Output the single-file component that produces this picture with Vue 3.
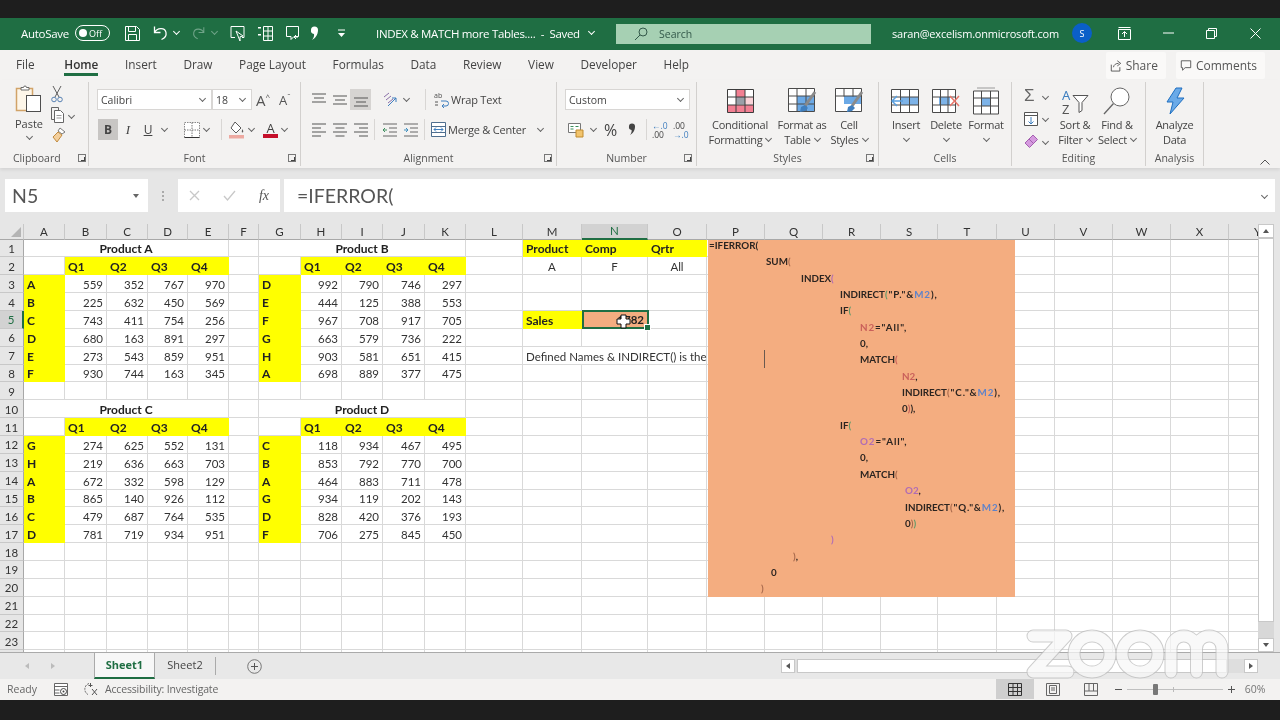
<script setup>
import { computed } from 'vue'

const tabs = ['File', 'Home', 'Insert', 'Draw', 'Page Layout', 'Formulas', 'Data', 'Review', 'View', 'Developer', 'Help']

// column widths, A to Y
const colNames = 'ABCDEFGHIJKLMNOPQRSTUVWXY'.split('')
const colWidths = [41, 42, 41, 40, 41, 30, 42, 41, 41, 42, 41, 57, 59, 66, 59, 58, 58, 58, 57, 59, 58, 58, 58, 58, 58]
const gridColumns = '24px ' + colWidths.map(w => w + 'px').join(' ')

const tables = [
  { name: 'Product A', col: 0, row: 1, labels: 'ABCDEF', data: [[559, 352, 767, 970], [225, 632, 450, 569], [743, 411, 754, 256], [680, 163, 891, 297], [273, 543, 859, 951], [930, 744, 163, 345]] },
  { name: 'Product B', col: 6, row: 1, labels: 'DEFGHA', data: [[992, 790, 746, 297], [444, 125, 388, 553], [967, 708, 917, 705], [663, 579, 736, 222], [903, 581, 651, 415], [698, 889, 377, 475]] },
  { name: 'Product C', col: 0, row: 10, labels: 'GHABCD', data: [[274, 625, 552, 131], [219, 636, 663, 703], [672, 332, 598, 129], [865, 140, 926, 112], [479, 687, 764, 535], [781, 719, 934, 951]] },
  { name: 'Product D', col: 6, row: 10, labels: 'CBAGDF', data: [[118, 934, 467, 495], [853, 792, 770, 700], [464, 883, 711, 478], [934, 119, 202, 143], [828, 420, 376, 193], [706, 275, 845, 450]] }
]

const sheetRows = computed(() => {
  const cells = {}
  const put = (c, r, text, cls, span) => { cells[c + ':' + r] = { text, cls, span } }
  for (const t of tables) {
    put(t.col, t.row, t.name, 'bold center', 5)
    for (let i = 1; i < 5; i++) cells[(t.col + i) + ':' + t.row] = { skip: true }
    put(t.col, t.row + 1, '', '')
    for (let q = 0; q < 4; q++) put(t.col + 1 + q, t.row + 1, 'Q' + (q + 1), 'fill bold')
    t.data.forEach((vals, i) => {
      put(t.col, t.row + 2 + i, t.labels[i], 'fill bold')
      vals.forEach((v, q) => put(t.col + 1 + q, t.row + 2 + i, v, 'num'))
    })
  }
  put(12, 1, 'Product', 'fill bold')
  put(13, 1, 'Comp', 'fill bold')
  put(14, 1, 'Qrtr', 'fill bold')
  put(12, 2, 'A', 'center')
  put(13, 2, 'F', 'center')
  put(14, 2, 'All', 'center')
  put(12, 5, 'Sales', 'fill bold')
  put(12, 7, 'Defined Names & INDIRECT() is the', 'over', 3)
  cells['13:7'] = { skip: true }
  cells['14:7'] = { skip: true }
  const rows = []
  for (let r = 1; r <= 24; r++) {
    const row = { r, cells: [] }
    colNames.forEach((name, c) => {
      const cell = cells[c + ':' + r] || {}
      if (!cell.skip) row.cells.push({ key: name + r, ...cell, selected: name === 'N' && r === 5 })
    })
    rows.push(row)
  }
  return rows
})

const red = '#c9605a'
const blue = '#5f83c9'
const purple = '#b06db4'
const green = '#5f9a6a'
const brown = '#a86a4c'

// third item in a part: the video stretches that bit of text a little
const formula = [
  { x: 1, parts: [['=IFERROR(']] },
  { x: 58, parts: [['SUM'], ['(', brown]] },
  { x: 93, parts: [['INDEX'], ['(', purple]] },
  { x: 132, parts: [['INDIRECT'], ['(', green, 1], ['"P."&', null, 1], ['M2', blue, 1], ['),', null, 1]] },
  { x: 132, parts: [['IF'], ['(', green]] },
  { x: 152, parts: [['N2', red, 1], ['="All",', null, 1]] },
  { x: 152, parts: [['0,']] },
  { x: 152, parts: [['MATCH'], ['(', red]] },
  { x: 194, parts: [['N2', red], [',']] },
  { x: 194, parts: [['INDIRECT'], ['(', brown, 1], ['"C."&', null, 1], ['M2', blue, 1], ['),', null, 1]] },
  { x: 194, parts: [['0'], [')', red], ['),']] },
  { x: 132, parts: [['IF'], ['(', green]] },
  { x: 152, parts: [['O2', purple, 1], ['="All",', null, 1]] },
  { x: 152, parts: [['0,']] },
  { x: 152, parts: [['MATCH'], ['(', brown]] },
  { x: 197, parts: [['O2', purple], [',']] },
  { x: 197, parts: [['INDIRECT'], ['(', brown, 1], ['"Q."&', null, 1], ['M2', blue, 1], ['),', null, 1]] },
  { x: 197, parts: [['0'], [')', brown], [')', green]] },
  { x: 123, parts: [[')', purple]] },
  { x: 85, parts: [[')', brown], [',']] },
  { x: 63, parts: [['0']] },
  { x: 53, parts: [[')', brown]] }
]

const alignIcons = {
  top: 'M0 1h14M2 5h10M0 9h14',
  middle: 'M0 3h14M2 7h10M0 11h14',
  bottom: 'M0 5h14M2 9h10M0 13h14',
  left: 'M0 1h14M0 5h9M0 9h14M0 13h9',
  center: 'M0 1h14M2.5 5h9M0 9h14M2.5 13h9',
  right: 'M0 1h14M5 5h9M0 9h14M5 13h9'
}
</script>

<template>
  <div class="app">
    <div class="blackbar"></div>

    <header class="titlebar">
      <span class="autosave">AutoSave</span>
      <span class="toggle"><i></i>Off</span>
      <svg class="t-save" width="17" height="17" viewBox="0 0 17 17"><path d="M1.500 1.500h11l3 3v11h-14zM4.500 1.500v5h7v-5M4.500 15.500v-6h8v6" fill="none" stroke="#fff" /></svg>
      <svg class="t-undo" width="16" height="16" viewBox="0 0 16 16"><path d="M2.500 1.500v6h6M2.500 7.500C5 2.500 13 2 14 7.500c.6 3.500-2 6-4.500 7" fill="none" stroke="#fff" stroke-width="1.300" /></svg>
      <i class="chev white c-undo"></i>
      <svg class="t-redo" width="14" height="16" viewBox="0 0 16 16"><path d="M13.500 1.500v6h-6M13.500 7.500C11 2.500 3 2 2 7.500c-.6 3.500 2 6 4.500 7" fill="none" stroke="#6fa388" stroke-width="1.200" /></svg>
      <i class="chev dim c-redo"></i>
      <svg class="t-q1" width="15" height="17" viewBox="0 0 15 17"><path d="M5 12.500H1V1.500h13v11h-2" fill="none" stroke="#fff" /><path d="M6 6l7 5-3 .8 0 4.200z" fill="none" stroke="#fff" /></svg>
      <svg class="t-q2" width="16" height="17" viewBox="0 0 16 17"><path d="M2.500 2v13" stroke="#fff" stroke-dasharray="1.500 5.500" stroke-width="3" /><path d="M6.500 1.500h9v14h-9zM6.500 6h9M6.500 11h9M11 1.500v14" fill="none" stroke="#fff" /></svg>
      <svg class="t-q3" width="15" height="17" viewBox="0 0 15 17"><path d="M1.500 1.500h12v10H9l-3 3v-3H1.500z" fill="none" stroke="#fff" /><path d="M11 10l-2 2 2 2M9 12h4" fill="none" stroke="#fff" /></svg>
      <svg class="t-q4" width="9" height="15" viewBox="0 0 9 15"><path d="M1 4a3.500 3.500 0 1 1 7 0c0 5-3 8.500-6 10 1.500-2 2.500-4 2-6A3.500 3.500 0 0 1 1 4z" fill="#fff" /></svg>
      <svg class="t-q5" width="7" height="9" viewBox="0 0 7 9"><path d="M0 1h7" stroke="#fff" /><path d="M0 4h7L3.500 8z" fill="#fff" /></svg>
      <span class="doc">INDEX &amp; MATCH more Tables....&nbsp; - &nbsp;Saved</span>
      <i class="chev white c-doc"></i>
      <div class="search">
        <svg width="14" height="14" viewBox="0 0 14 14"><circle cx="9" cy="5" r="4" fill="none" stroke="#33594a" /><path d="M6 8l-5 5" stroke="#33594a" /></svg>
        <span>Search</span>
      </div>
      <span class="email">saran@excelism.onmicrosoft.com</span>
      <span class="avatar">S</span>
      <svg class="t-win1" width="13" height="13" viewBox="0 0 13 13"><path d="M.5 2.500h12v10H.5zM.5.500h12M6.500 10V5M4 7l2.500-2.500L9 7" fill="none" stroke="#fff" /></svg>
      <svg class="t-win2" width="11" height="2" viewBox="0 0 11 2"><path d="M0 1h11" stroke="#fff" /></svg>
      <svg class="t-win3" width="11" height="11" viewBox="0 0 11 11"><path d="M.5 2.500h8v8h-8zM2.500 2.500v-2h8v8h-2" fill="none" stroke="#fff" /></svg>
      <svg class="t-win4" width="11" height="11" viewBox="0 0 11 11"><path d="M.5.500l10 10M10.500.500l-10 10" stroke="#fff" /></svg>
    </header>

    <nav class="tabs">
      <span v-for="t in tabs" :key="t" class="tab" :class="{ active: t === 'Home' }">{{ t }}</span>
      <div class="tab-right">
        <span class="share">
          <svg width="12" height="13" viewBox="0 0 14 14"><path d="M1.500 6v7.500h10V9M4 9c.5-3 3-4.500 6-4.500M8.500 1.500l4 3-4 3" fill="none" stroke="#4a4a4a" /></svg>
          Share
        </span>
        <span class="share">
          <svg width="12" height="13" viewBox="0 0 14 14"><path d="M1.500 1.500h11v8H6l-3 3v-3H1.500z" fill="none" stroke="#4a4a4a" /></svg>
          Comments
        </span>
      </div>
    </nav>

    <section class="ribbon">
      <div class="group g-clip">
        <div class="body clip">
          <div class="paste">
            <svg width="28" height="28" viewBox="0 0 28 28"><rect x="1.500" y="3.500" width="16" height="22" fill="#fdf6e9" stroke="#d1a368" stroke-width="1.500" /><path d="M6 5V2.500h2.500a1.500 1.500 0 0 1 3 0H14V5z" fill="#fff" stroke="#6a6a6a" /><rect x="11.500" y="10.500" width="14" height="16" fill="#fff" stroke="#4e4e4e" /></svg>
            <span>Paste</span>
            <i class="chev"></i>
          </div>
          <div class="clip-side">
            <svg width="12" height="18" viewBox="0 0 12 18"><path d="M2 1l6 11M10 1L4 12" fill="none" stroke="#5e5e5e" /><circle cx="3" cy="14.500" r="2.300" fill="none" stroke="#5982b3" /><circle cx="9" cy="14.500" r="2.300" fill="none" stroke="#5982b3" /></svg>
            <span class="row-in">
              <svg width="13" height="16" viewBox="0 0 13 16"><path d="M3.500 12.500h-3v-12h7v3" fill="none" stroke="#666" /><path d="M3.500 3.500h6l3 3v9h-9z" fill="#fff" stroke="#666" /><path d="M5.500 8.500h5M5.500 11h5" stroke="#999" /></svg>
              <i class="chev"></i>
            </span>
            <svg width="15" height="16" viewBox="0 0 15 16"><path d="M9 1l5 4-3 2-4-3z" fill="#fff" stroke="#7a7a7a" /><path d="M7 5L2 10l4 5 5-7z" fill="#f3cf9c" stroke="#c08a3e" /></svg>
          </div>
        </div>
        <div class="label">Clipboard<i class="launch"></i></div>
      </div>

      <div class="group g-font">
        <div class="body stack">
          <div class="line">
            <span class="combo name">Calibri<i class="chev"></i></span>
            <span class="combo size">18<i class="chev"></i></span>
            <span class="big-a">A<sup>^</sup></span>
            <span class="big-a small">A<sup>ˇ</sup></span>
          </div>
          <div class="line l2">
            <span class="fb pressed">B</span>
            <span class="fb it">I</span>
            <span class="fb un">U</span>
            <i class="chev"></i>
            <svg class="borders" width="16" height="16" viewBox="0 0 16 16"><path d="M.5.500h15v15H.5z" fill="#fff" stroke="#8a8a8a" stroke-dasharray="1.500 1" /><path d="M8 .500v15M.5 8h15" stroke="#777" stroke-dasharray="1.500 1" /><path d="M.5 15.500h15" stroke="#333" /></svg>
            <i class="chev"></i>
            <i class="vsep"></i>
            <svg width="16" height="18" viewBox="0 0 16 18"><path d="M6 1l6 6-5 5-5-5z" fill="#fff" stroke="#5a5a5a" /><path d="M13.500 8c1 2 1 3.500 0 3.500s-1-1.500 0-3.500z" fill="#5a5a5a" /><rect y="14" width="15" height="3.500" fill="#eda9a1" /></svg>
            <i class="chev"></i>
            <span class="color-a">A</span>
            <i class="chev"></i>
          </div>
        </div>
        <div class="label">Font<i class="launch"></i></div>
      </div>

      <div class="group g-align">
        <div class="body stack">
          <div class="line a1">
            <span v-for="k in ['top', 'middle', 'bottom']" :key="k" class="ab" :class="{ pressed: k === 'bottom' }">
              <svg width="14" height="14" viewBox="0 0 14 14"><path :d="alignIcons[k]" stroke="#555" stroke-width="1.200" /></svg>
            </span>
            <svg class="orient" width="16" height="16" viewBox="0 0 16 16"><path d="M2 5l5-4M4 8l5-4M6 11l5-4" stroke="#8a6fa8" /><path d="M6 14l8-8M10 6h4v4" fill="none" stroke="#3f7fbf" /></svg>
            <i class="chev"></i>
            <i class="vsep tall"></i>
            <svg width="15" height="17" viewBox="0 0 15 17" overflow="visible"><text x="0" y="7" font-size="7" font-family="Noto Sans" fill="#555">ab</text><path d="M1 11h3M1 14h3" stroke="#555" /><path d="M7 10h5a2 2 0 0 1 0 5H8M10 13l-2 2 2 2" fill="none" stroke="#3f7fbf" /></svg>
            <span class="ctext">Wrap Text</span>
          </div>
          <div class="line a2">
            <span v-for="k in ['left', 'center', 'right']" :key="k" class="ab">
              <svg width="14" height="14" viewBox="0 0 14 14"><path :d="alignIcons[k]" stroke="#555" stroke-width="1.200" /></svg>
            </span>
            <i class="vsep"></i>
            <span class="ab">
              <svg width="14" height="14" viewBox="0 0 14 14"><path d="M0 1h14M6 5h8M6 9h8M0 13h14" stroke="#666" /><path d="M4 7H0M2 5L0 7l2 2" fill="none" stroke="#3f8f5f" /></svg>
            </span>
            <span class="ab">
              <svg width="14" height="14" viewBox="0 0 14 14"><path d="M0 1h14M6 5h8M6 9h8M0 13h14" stroke="#666" /><path d="M0 7h4M2 5l2 2-2 2" fill="none" stroke="#3f8fbf" /></svg>
            </span>
            <i class="vsep tall2"></i>
            <svg width="15" height="15" viewBox="0 0 15 15"><path d="M.5.500h14v14H.5zM.5 4.500h14M.5 10.500h14" fill="#fff" stroke="#4f6f8f" /><path d="M3 7.500h9M5 5.500l-2 2 2 2M10 5.500l2 2-2 2" fill="none" stroke="#3f7fbf" /></svg>
            <span class="ctext">Merge &amp; Center</span>
            <i class="chev"></i>
          </div>
        </div>
        <div class="label">Alignment<i class="launch"></i></div>
      </div>

      <div class="group g-num">
        <div class="body stack">
          <div class="line"><span class="combo custom">Custom<i class="chev"></i></span></div>
          <div class="line n2">
            <svg width="17" height="16" viewBox="0 0 17 16"><path d="M.5 1.500h12v9H.5z" fill="#fff" stroke="#777" /><path d="M2.500 4.500h3M2.500 7h3M7.500 4.500h3" stroke="#3a8f5a" /><path d="M8 8h7v7H8z" fill="#f2c46d" stroke="#c18b2e" /></svg>
            <i class="chev"></i>
            <span class="pct">%</span>
            <svg class="comma" width="8" height="13" viewBox="0 0 9 15"><path d="M1 4a3.500 3.500 0 1 1 7 0c0 5-3 8.500-6 10 1.500-2 2.500-4 2-6A3.500 3.500 0 0 1 1 4z" fill="#444" /></svg>
            <i class="vsep"></i>
            <span class="dec"><em>←.0</em><b>.00</b></span>
            <span class="dec"><b>.00</b><em>→.0</em></span>
          </div>
        </div>
        <div class="label">Number<i class="launch"></i></div>
      </div>

      <div class="group g-styles">
        <div class="body bigs">
          <div class="big w-cond">
            <svg width="27" height="24" viewBox="0 0 27 24"><path d="M.5.500h26v23H.5z" fill="#fff" /><path d="M9 .500h9v7.500H9z" fill="#f27f92" /><path d="M9 8h9v7.500H9z" fill="#9a9fa8" /><path d="M.5 16h26v7.500H.5z" fill="#f27f92" /><path d="M18 8h8.500v7.500H18z" fill="#f9d3d8" /><path d="M.5.500h26v23H.5zM.5 8h26M.5 16h26M9 .500v23M18 .500v23" fill="none" stroke="#3c3c3c" /></svg>
            <span>Conditional</span><span>Formatting<i class="chev"></i></span>
          </div>
          <div class="big w-fmt">
            <svg width="29" height="26" viewBox="0 0 29 26"><path d="M.5.500h26v23H.5z" fill="#fff" /><path d="M9 8h17.500v15.500H9z" fill="#6ba9e6" /><path d="M.5.500h26v23H.5zM.5 8h26M.5 16h26M9 .500v23M18 .500v23" fill="none" stroke="#4a4a4a" /><path d="M27 4L17 18" stroke="#8a8a8a" stroke-width="3" /><path d="M17 17l-4 2-1 5 5-1 3-3z" fill="#3f7fbf" /></svg>
            <span>Format as</span><span>Table<i class="chev"></i></span>
          </div>
          <div class="big w-cell">
            <svg width="29" height="26" viewBox="0 0 29 26"><path d="M.5.500h26v23H.5z" fill="#fff" /><path d="M9 8h17.500v8H9z" fill="#6ba9e6" /><path d="M.5.500h26v23H.5zM.5 8h26M9 .500v8M18 .500v8" fill="none" stroke="#4a4a4a" /><path d="M27 4L17 18" stroke="#8a8a8a" stroke-width="3" /><path d="M17 17l-4 2-1 5 5-1 3-3z" fill="#3f7fbf" /></svg>
            <span>Cell</span><span>Styles<i class="chev"></i></span>
          </div>
        </div>
        <div class="label">Styles<i class="launch"></i></div>
      </div>

      <div class="group g-cells">
        <div class="body bigs">
          <div class="big w-ins">
            <svg width="30" height="24" viewBox="0 0 30 24"><path d="M.5.500h27v23H.5z" fill="#fff" /><path d="M10 8h18v8H10z" fill="#7db3e8" /><path d="M.5.500h27v23H.5zM.5 8h27M.5 16h27M9.500.500v23M18.500.500v23" fill="none" stroke="#4a4a4a" /><path d="M12 12H1M6 7l-5 5 5 5" fill="none" stroke="#5aa0e0" stroke-width="1.500" /></svg>
            <span>Insert</span><i class="chev"></i>
          </div>
          <div class="big w-del">
            <svg width="28" height="24" viewBox="0 0 28 24"><path d="M.5.500h23v23H.5z" fill="#fff" /><path d="M7 8h11v8H7z" fill="#7db3e8" /><path d="M.5.500h23v23H.5zM.5 8h23M.5 16h23M8.500.500v23M16 .500v23" fill="none" stroke="#4a4a4a" /><path d="M18 7l9 10M27 7l-9 10" stroke="#e8766a" stroke-width="1.500" /></svg>
            <span>Delete</span><i class="chev"></i>
          </div>
          <div class="big w-for">
            <svg width="26" height="27" viewBox="0 0 26 27"><path d="M4 .500h18" stroke="#9a9a9a" /><path d="M.5 3.500h25v23H.5z" fill="#fff" /><path d="M8.500 10.500h9v8h-9z" fill="#7db3e8" /><path d="M.5 3.500h25v23H.5zM.5 10.500h25M.5 18.500h25M8.500 3.500v23M17.500 3.500v23" fill="none" stroke="#4a4a4a" /></svg>
            <span>Format</span><i class="chev"></i>
          </div>
        </div>
        <div class="label">Cells</div>
      </div>

      <div class="group g-edit">
        <div class="body edit">
          <div class="edit-col">
            <span class="row-in"><em class="sigma">Σ</em><i class="chev"></i></span>
            <span class="row-in"><svg width="14" height="14" viewBox="0 0 14 14"><path d="M.5.500h13v13H.5zM.5 3.500h13" fill="#fff" stroke="#555" /><path d="M7 5v7M4.500 9.500L7 12l2.500-2.500" fill="none" stroke="#3f7fbf" /></svg><i class="chev"></i></span>
            <span class="row-in"><svg width="14" height="14" viewBox="0 0 14 14"><path d="M9 1l4.500 4.500-8 8L1 9z" fill="#d59adf" stroke="#a45fb0" /><path d="M5 5l4.500 4.500" stroke="#a45fb0" /></svg><i class="chev"></i></span>
          </div>
          <div class="big w-sort">
            <svg width="28" height="27" viewBox="0 0 28 27" overflow="visible"><text x="1" y="12" font-size="13" font-family="Noto Sans" fill="#3f7fbf">A</text><text x="1" y="26" font-size="13" font-family="Noto Sans" fill="#555">Z</text><path d="M12 8h15l-6 7v8l-3 2V15z" fill="#fff" stroke="#555" /></svg>
            <span>Sort &amp;</span><span>Filter<i class="chev"></i></span>
          </div>
          <div class="big w-find">
            <svg width="28" height="28" viewBox="0 0 28 28"><circle cx="17" cy="10" r="9" fill="#fff" stroke="#666" /><path d="M10.500 16.500L1 27" stroke="#666" stroke-width="1.300" /></svg>
            <span>Find &amp;</span><span>Select<i class="chev"></i></span>
          </div>
        </div>
        <div class="label">Editing</div>
      </div>

      <div class="group g-ana">
        <div class="body bigs">
          <div class="big w-ana">
            <svg width="20" height="28" viewBox="0 0 20 28"><path d="M11 1L2 15h6L5 27l14-16h-7l5-10z" fill="#6aaae8" stroke="#1f6fc0" /></svg>
            <span>Analyze</span><span>Data</span>
          </div>
        </div>
        <div class="label">Analysis</div>
      </div>

      <svg class="collapse" width="10" height="6" viewBox="0 0 10 6"><path d="M.5 5.500L5 1l4.500 4.500" fill="none" stroke="#555" /></svg>
    </section>

    <div class="formula-row">
      <div class="namebox"><span>N5</span><i class="tri"></i></div>
      <i class="dots"></i>
      <div class="fx">
        <svg width="11" height="11" viewBox="0 0 11 11"><path d="M1 1l9 9M10 1l-9 9" stroke="#c8c8c8" stroke-width="1.300" /></svg>
        <svg width="13" height="11" viewBox="0 0 13 11"><path d="M1 6l3.500 4L12 1" fill="none" stroke="#c8c8c8" stroke-width="1.300" /></svg>
        <em>fx</em>
      </div>
      <div class="fbar"><span>=IFERROR(</span><i class="chev"></i></div>
    </div>

    <div class="sheet">
      <div class="grid" :style="{ gridTemplateColumns: gridColumns }">
        <div class="corner"><i></i></div>
        <div v-for="c in colNames" :key="c" class="ch" :class="{ sel: c === 'N' }">{{ c }}</div>
        <template v-for="row in sheetRows" :key="row.r">
          <div class="rh" :class="{ sel: row.r === 5 }">{{ row.r < 24 ? row.r : '' }}</div>
          <div
            v-for="cell in row.cells"
            :key="cell.key"
            class="cell"
            :class="[cell.cls, { selected: cell.selected }]"
            :style="cell.span ? { gridColumn: 'span ' + cell.span } : null"
          >
            <template v-if="cell.selected">
              <span class="sel-val">1782</span>
              <i class="handle"></i>
            </template>
            <template v-else>{{ cell.text }}</template>
          </div>
        </template>
      </div>

      <div class="textbox">
        <div v-for="(ln, i) in formula" :key="i" class="fline" :style="{ paddingLeft: ln.x + 'px' }">
          <span v-for="(p, j) in ln.parts" :key="j" :class="{ wide: p[2] }" :style="p[1] ? { color: p[1] } : null">{{ p[0] }}</span>
        </div>
        <i class="caret"></i>
      </div>

      <svg class="cursor" width="15" height="15" viewBox="0 0 15 15"><path d="M5 1h5v4h4v5h-4v4H5v-4H1V5h4z" fill="#fff" stroke="#111" /></svg>

      <div class="vscroll">
        <span class="vbtn"><i class="up"></i></span>
        <span class="vthumb"></span>
        <span class="vtrack"></span>
        <span class="vbtn"><i class="down"></i></span>
      </div>
    </div>

    <div class="sheetbar">
      <span class="nav"><i class="lft"></i><i class="rgt"></i></span>
      <span class="stab active">Sheet1</span>
      <span class="stab">Sheet2</span>
      <i class="stab-sep"></i>
      <svg class="plus" width="15" height="15" viewBox="0 0 15 15"><circle cx="7.500" cy="7.500" r="6.800" fill="none" stroke="#777" /><path d="M7.500 4v7M4 7.500h7" stroke="#555" /></svg>
      <div class="hscroll">
        <span class="hbtn"><i class="lft dark"></i></span>
        <span class="hthumb"></span>
        <span class="hbtn r"><i class="rgt dark"></i></span>
      </div>
    </div>

    <footer class="status">
      <span>Ready</span>
      <svg class="st-macro" width="14" height="13" viewBox="0 0 14 13"><path d="M.5.500h13v12H.5zM.5 3.500h13M.5 7h5M.5 10h5" fill="#fff" stroke="#666" /><circle cx="9.500" cy="8.500" r="3" fill="none" stroke="#444" /><circle cx="9.500" cy="8.500" r="1" fill="#444" /></svg>
      <svg class="st-acc" width="15" height="14" viewBox="0 0 15 14"><path d="M6 1.500a6 6 0 0 0-1 11" fill="none" stroke="#666" stroke-dasharray="2 1" /><path d="M7.500 1v4M5.500 3.500h4" stroke="#555" /><path d="M9 7l5 6M14 7l-5 6" stroke="#555" /></svg>
      <span class="acc">Accessibility: Investigate</span>
      <div class="st-right">
        <span class="view active">
          <svg width="14" height="13" viewBox="0 0 14 13"><path d="M.5.500h13v12H.5zM.5 4.500h13M.5 8.500h13M5 .500v12M9.500.500v12" fill="none" stroke="#333" /></svg>
        </span>
        <span class="view">
          <svg width="14" height="13" viewBox="0 0 14 13"><path d="M.5.500h13v12H.5z" fill="none" stroke="#666" /><path d="M3.500 2.500h7v8h-7zM5 5h4M5 7h4" fill="none" stroke="#666" /></svg>
        </span>
        <span class="view">
          <svg width="14" height="13" viewBox="0 0 14 13"><path d="M.5.500h13v12H.5zM.5 8h13M5 .500V8M9.500.500V8" fill="none" stroke="#666" /></svg>
        </span>
        <span class="zoom-ctl">
          <i class="minus"></i>
          <span class="track"><i class="tick"></i><i class="knob"></i></span>
          <i class="add"></i>
        </span>
        <span class="pct-label">60%</span>
      </div>
    </footer>

    <div class="blackbar bottom"></div>

    <svg class="watermark" width="210" height="58" viewBox="0 0 210 58">
      <g fill="none" stroke-linejoin="round" stroke-linecap="round">
        <g stroke="#bdbdbd" stroke-width="13">
          <path d="M11 11h33L11 47h35" />
          <circle cx="70" cy="29" r="18" />
          <circle cx="118" cy="29" r="18" />
          <path d="M149 47V23.750a12.750 12.750 0 0 1 25.500 0V47M174.500 23.750a12.750 12.750 0 0 1 25.500 0V47" />
        </g>
        <g stroke="#f7f7f7" stroke-width="11">
          <path d="M11 11h33L11 47h35" />
          <circle cx="70" cy="29" r="18" />
          <circle cx="118" cy="29" r="18" />
          <path d="M149 47V23.750a12.750 12.750 0 0 1 25.500 0V47M174.500 23.750a12.750 12.750 0 0 1 25.500 0V47" />
        </g>
      </g>
    </svg>
  </div>
</template>

<style>
html, body { margin: 0; background: #1e1e1e; overflow: hidden; }
</style>

<style scoped>
.app {
  position: relative;
  width: 1280px;
  height: 720px;
  display: flex;
  flex-direction: column;
  overflow: hidden;
  background: #e6e6e6;
  font-family: "Open Sans", "Noto Sans", sans-serif;
  color: #444;
  filter: blur(.3px);
}
i { font-style: normal; display: block; }
svg { display: block; flex: none; }
.blackbar { height: 18px; background: #1e1e1e; flex: none; }
.blackbar.bottom { height: 20px; }

.chev {
  width: 4px;
  height: 4px;
  border-right: 1px solid #666;
  border-bottom: 1px solid #666;
  transform: rotate(45deg);
  flex: none;
}
.chev.white { border-color: #fff; }
.chev.dim { border-color: #6fa388; }

/* title bar */
.titlebar {
  height: 32px;
  box-sizing: border-box;
  padding-bottom: 2px;
  flex: none;
  background: #1f6e43;
  color: #fff;
  display: flex;
  align-items: center;
  font-size: 11.500px;
}
.autosave { margin-left: 21px; width: 54px; letter-spacing: -.3px; }
.toggle {
  width: 35px;
  height: 16px;
  box-sizing: border-box;
  border: 1px solid #fff;
  border-radius: 8px;
  display: flex;
  align-items: center;
  font-size: 9px;
  gap: 2px;
  padding-left: 3px;
}
.toggle i { width: 8px; height: 8px; border-radius: 50%; background: #fff; }
.t-save { margin-left: 14px; }
.t-undo { margin-left: 11px; }
.c-undo { margin-left: 6px; margin-top: -3px; }
.t-redo { margin-left: 13px; }
.c-redo { margin-left: 6px; margin-top: -3px; }
.t-q1 { margin-left: 13px; }
.t-q2 { margin-left: 12px; }
.t-q3 { margin-left: 12px; }
.t-q4 { margin-left: 10px; }
.t-q5 { margin-left: 19px; }
.doc { margin-left: 31px; width: 211px; white-space: nowrap; letter-spacing: -.32px; }
.c-doc { margin-left: 2px; margin-top: -3px; }
.search {
  margin-left: 22px;
  width: 255px;
  height: 20px;
  background: #a6d0b3;
  display: flex;
  align-items: center;
  color: #33594a;
  font-size: 10.500px;
  padding-left: 18px;
  box-sizing: border-box;
  gap: 11px;
  margin-top: 2px;
}
.email { margin-left: 21px; width: 170px; white-space: nowrap; letter-spacing: -.2px; font-size: 11px; padding-top: 1px; }
.avatar {
  margin-left: 10px;
  width: 20px;
  height: 20px;
  border-radius: 50%;
  background: #0a5fc8;
  display: flex;
  align-items: center;
  justify-content: center;
  font-size: 9px;
}
.t-win1 { margin-left: 26px; }
.t-win2 { margin-left: 32px; }
.t-win3 { margin-left: 32px; }
.t-win4 { margin-left: 33px; }

/* tabs */
.tabs {
  height: 30px;
  box-sizing: border-box;
  padding: 0 0 2px 16px;
  flex: none;
  background: #f3f2f1;
  display: flex;
  align-items: center;
  gap: 26.600px;
  font-size: 11.800px;
  position: relative;
}
.tab { position: relative; white-space: nowrap; line-height: 28px; }
.tab:first-child { margin-right: 3px; }
.tab.active { font-weight: 600; color: #333; }
.tab.active::after {
  content: "";
  position: absolute;
  left: 0;
  right: 0;
  bottom: 2px;
  height: 3px;
  background: #1f6e43;
}
.tab-right { margin-left: auto; display: flex; gap: 10px; margin-right: 15px; }
.share {
  display: flex;
  align-items: center;
  gap: 4px;
  height: 27px;
  margin-top: 2px;
  padding: 0 8px 0 4px;
  background: #faf9f8;
  font-size: 12px;
  color: #555;
  border-radius: 2px;
}

/* ribbon */
.ribbon {
  height: 88px;
  flex: none;
  background: #f3f2f1;
  display: flex;
  position: relative;
  box-shadow: 0 2px 3px rgba(0, 0, 0, .08);
  font-size: 11px;
}
.group {
  display: flex;
  flex-direction: column;
  box-sizing: border-box;
  border-right: 1px solid #d2d0ce;
  margin: 2px 0 2px;
  flex: none;
}
.g-clip { width: 89px; }
.g-font { width: 212px; }
.g-align { width: 256px; }
.g-num { width: 140px; }
.g-styles { width: 182px; }
.g-cells { width: 133px; }
.g-edit { width: 134px; }
.g-ana { width: 58px; }
.body { flex: 1; min-height: 0; }
.label {
  position: relative;
  height: 16px;
  line-height: 16px;
  text-align: center;
  font-size: 10.500px;
  color: #555;
}
.g-clip .label { text-align: left; padding-left: 13px; }
.launch {
  position: absolute;
  right: 4px;
  top: 4px;
  width: 6px;
  height: 6px;
  border: 1px solid #777;
}
.launch::after {
  content: "";
  position: absolute;
  right: 0;
  bottom: 0;
  width: 3px;
  height: 3px;
  border-right: 1px solid #444;
  border-bottom: 1px solid #444;
}
.g-clip .launch { right: 2px; }

.clip { display: flex; padding: 3px 0 0 14px; gap: 6px; }
.paste { display: flex; flex-direction: column; align-items: center; width: 30px; font-size: 11px; line-height: 14px; }
.paste span { margin-top: 4px; }
.paste .chev { margin-top: 3px; }
.clip-side { display: flex; flex-direction: column; gap: 4px; padding-left: 1px; align-items: flex-start; }
.row-in { display: flex; align-items: center; gap: 5px; }
.stack { display: flex; flex-direction: column; padding-top: 7px; gap: 9px; }
.line { display: flex; align-items: center; height: 21px; }

.combo {
  height: 21px;
  box-sizing: border-box;
  background: #fff;
  border: 1px solid #d8d6d4;
  display: flex;
  align-items: center;
  justify-content: space-between;
  padding: 0 6px 0 3px;
  font-size: 10.500px;
}
.combo .chev { margin-top: -2px; }
.name { width: 115px; margin-left: 8px; }
.size { width: 40px; }
.big-a { font-size: 15px; margin-left: 4px; width: 22px; color: #555; }
.big-a sup { font-size: 8px; vertical-align: 6px; line-height: 0; }
.big-a.small { font-size: 13px; width: 14px; margin-left: 1px; }
.l2 { padding-left: 9px; gap: 0; }
.fb { width: 20px; height: 21px; display: flex; align-items: center; justify-content: center; font-size: 12px; }
.fb.pressed { background: #c8c6c4; font-weight: 700; }
.fb.it { font-style: italic; font-family: "Liberation Serif", serif; font-size: 13px; }
.fb.un { text-decoration: underline; }
.l2 .chev { margin: -2px 9px 0 4px; }
.borders { margin-left: 8px; }
.vsep { width: 1px; height: 21px; background: #d8d6d4; margin: 0 7px 0 3px; }
.color-a { width: 15px; text-align: center; font-size: 13px; line-height: 12px; border-bottom: 4px solid #c50f2a; }

.a1 { padding-left: 7px; }
.a2 { padding-left: 7px; }
.ab { width: 21px; height: 21px; display: flex; align-items: center; justify-content: center; }
.ab.pressed { background: #d6d4d2; }
.orient { margin-left: 11px; }
.a1 .chev { margin: -2px 6px 0 6px; }
.a1 .vsep.tall { margin: 0 8px 0 10px; }
.ctext { font-size: 11px; margin-left: 2px; white-space: nowrap; letter-spacing: -.2px; }
.a2 .chev { margin: -2px 0 0 12px; }
.a2 .vsep { margin: 0 4px 0 3px; }
.a2 .vsep.tall2 { margin: 0 6px 0 3px; }

.custom { width: 125px; margin-left: 8px; }
.n2 { padding-left: 11px; }
.n2 .chev { margin: -2px 0 0 6px; }
.pct { font-size: 16px; margin-left: 8px; width: 17px; }
.comma { margin-left: 7px; }
.n2 .vsep { margin: 0 5px 0 10px; }
.dec { display: flex; flex-direction: column; font-size: 8.500px; line-height: 9px; width: 21px; }
.dec em { font-style: normal; color: #3f7fbf; }
.dec b { font-weight: 400; }

.bigs { display: flex; padding-top: 5px; }
.big {
  display: flex;
  flex-direction: column;
  align-items: center;
  line-height: 15px;
  white-space: nowrap;
  font-size: 11px;
  letter-spacing: -.25px;
  position: relative;
}
.big svg { height: 28px; margin-bottom: 2px; }
.big > span { display: flex; align-items: center; }
.big .chev { margin: -2px 0 0 4px; }
.big > .chev { margin: 4px 0 0; }
.w-cond { width: 68px; margin-left: 9px; }
.w-fmt { width: 56px; }
.w-cell { width: 38px; }
.w-ins { width: 40px; margin-left: 7px; }
.w-del { width: 40px; }
.w-for { width: 40px; }

.edit { display: flex; padding-top: 5px; }
.edit-col { display: flex; flex-direction: column; gap: 5px; width: 46px; padding-left: 12px; box-sizing: border-box; }
.edit-col .row-in { height: 18px; }
.sigma { font-style: normal; font-size: 17px; line-height: 18px; width: 14px; font-family: "Liberation Sans", sans-serif; color: #666; }
.w-sort { width: 34px; }
.w-find { width: 40px; margin-left: 5px; }
.w-ana { width: 58px; }
.collapse { position: absolute; right: 10px; bottom: 3px; }

/* formula row */
.formula-row {
  height: 33px;
  flex: none;
  margin-top: 11px;
  display: flex;
  color: #555;
}
.namebox {
  width: 143px;
  margin-left: 5px;
  background: #fff;
  display: flex;
  align-items: center;
  justify-content: space-between;
  padding: 0 9px 0 7px;
  box-sizing: border-box;
  font-family: Lato, sans-serif;
  font-size: 19.500px;
}
.tri { width: 0; height: 0; border: 3px solid transparent; border-top: 4px solid #666; border-bottom: 0; }
.dots { width: 2px; height: 10px; margin: 12px 12px 0 14px; border-left: 2px dotted #aaa; }
.fx {
  width: 102px;
  background: #fff;
  display: flex;
  align-items: center;
  justify-content: space-between;
  padding: 0 11px;
  box-sizing: border-box;
}
.fx em { font-family: "Liberation Serif", serif; font-size: 14px; color: #555; }
.fbar {
  margin-left: 4px;
  width: 991px;
  background: #fff;
  display: flex;
  align-items: center;
  justify-content: space-between;
  padding: 0 8px 0 13px;
  box-sizing: border-box;
  font-family: Lato, sans-serif;
  font-size: 19.500px;
}

/* sheet */
.sheet {
  height: 429.500px;
  flex: none;
  margin-top: 11.500px;
  position: relative;
  display: flex;
  overflow: hidden;
  border-bottom: 1px solid #aaa;
  box-sizing: border-box;
  font-family: Lato, sans-serif;
  font-size: 11px;
}
.grid {
  display: grid;
  width: 1258px;
  flex: none;
  overflow: hidden;
  grid-template-rows: 16px;
  grid-auto-rows: 17.870px;
  background: #fff;
}
.corner, .ch { background: #e6e6e6; border-right: 1px solid #c8c8c8; border-bottom: 1px solid #a8a8a8; box-sizing: border-box; }
.corner { position: relative; }
.corner i { position: absolute; right: 2px; bottom: 2px; width: 0; height: 0; border-left: 10px solid transparent; border-bottom: 10px solid #b4b4b4; }
.ch { display: flex; align-items: center; justify-content: center; color: #333; font-size: 11.500px; }
.ch.sel { background: #d2d2d2; color: #1f6e43; border-bottom: 2px solid #1f6e43; }
.rh {
  background: #e6e6e6;
  border-right: 1px solid #a8a8a8;
  border-bottom: 1px solid #c8c8c8;
  box-sizing: border-box;
  display: flex;
  align-items: center;
  justify-content: center;
  color: #333;
  font-size: 11.500px;
  padding-top: 1px;
}
.rh.sel { background: #d2d2d2; border-right: 2px solid #1f6e43; color: #1f6e43; }
.cell {
  border-right: 1px solid #d9d9d9;
  border-bottom: 1px solid #d9d9d9;
  box-sizing: border-box;
  display: flex;
  align-items: center;
  padding: 2px 3px 0;
  white-space: nowrap;
  min-width: 0;
  color: #333;
  font-size: 11.500px;
  position: relative;
}
.cell.num { justify-content: flex-end; }
.cell.center { justify-content: center; }
.cell.bold { font-weight: 700; color: #222; font-size: 12px; }
.cell.fill { background: #ff0; border-color: #ff0; }
.cell.selected {
  background: #f4ad80;
  border: 2px solid #1f6e43;
  justify-content: flex-end;
  font-weight: 700;
  color: #222;
  padding: 0 3px 0 0;
  margin: -1px -1px 0 0;
  z-index: 2;
}
.handle {
  position: absolute;
  right: -4px;
  bottom: -4px;
  width: 5px;
  height: 5px;
  background: #1f6e43;
  border: 1px solid #fff;
}

.textbox {
  position: absolute;
  left: 708px;
  top: 16.500px;
  width: 307px;
  height: 357px;
  box-sizing: border-box;
  background: #f4ad80;
  z-index: 3;
  font-size: 9.800px;
  font-weight: 700;
  line-height: 16.350px;
  color: #2b2420;
  white-space: nowrap;
}
.fline { height: 16.350px; position: relative; top: -3px; }
.wide { letter-spacing: .9px; }
.caret { position: absolute; left: 56px; top: 110px; width: 1px; height: 18px; background: #6a5a50; }
.cursor { position: absolute; left: 616px; top: 90px; z-index: 4; }

.vscroll {
  width: 16px;
  flex: none;
  display: flex;
  flex-direction: column;
  background: #e6e6e6;
}
.vbtn {
  height: 14px;
  flex: none;
  background: #fff;
  border: 1px solid #c8c8c8;
  box-sizing: border-box;
  display: flex;
  align-items: center;
  justify-content: center;
}
.vthumb { height: 384px; flex: none; background: #fff; border: 1px solid #c8c8c8; box-sizing: border-box; }
.vtrack { flex: 1; background: #d8d8d8; }
.up { border: 3.500px solid transparent; border-bottom: 4px solid #555; border-top: 0; width: 0; height: 0; }
.down { border: 3.500px solid transparent; border-top: 4px solid #555; border-bottom: 0; width: 0; height: 0; }

/* sheet tabs */
.sheetbar {
  height: 26px;
  flex: none;
  display: flex;
  align-items: center;
  background: #e8e8e8;
  position: relative;
  font-size: 11px;
}
.nav { display: flex; gap: 22px; padding-left: 25px; width: 69px; box-sizing: border-box; }
.lft { border: 3.500px solid transparent; border-right: 4px solid #bbb; border-left: 0; width: 0; height: 0; }
.rgt { border: 3.500px solid transparent; border-left: 4px solid #bbb; border-right: 0; width: 0; height: 0; }
.lft.dark { border-right-color: #555; }
.rgt.dark { border-left-color: #555; }
.stab { width: 60px; text-align: center; height: 26px; line-height: 24px; box-sizing: border-box; }
.stab.active {
  width: 61px;
  margin-left: 25px;
  background: #f7f7f7;
  font-weight: 700;
  color: #1f6e43;
  border-bottom: 2px solid #1f6e43;
  border-left: 1px solid #aaa;
  border-right: 1px solid #aaa;
}
.stab-sep { width: 1px; height: 18px; background: #aaa; }
.plus { margin-left: 31px; }
.hscroll {
  position: absolute;
  left: 781px;
  top: 6px;
  width: 477px;
  height: 14px;
  display: flex;
  background: #dedede;
}
.hbtn {
  width: 14px;
  flex: none;
  background: #fff;
  border: 1px solid #c8c8c8;
  box-sizing: border-box;
  display: flex;
  align-items: center;
  justify-content: center;
}
.hbtn.r { margin-left: auto; }
.hthumb { width: 430px; margin-left: 2px; background: #fff; border: 1px solid #c8c8c8; box-sizing: border-box; }

/* status bar */
.status {
  height: 21px;
  box-sizing: border-box;
  padding: 0 0 1px 7px;
  flex: none;
  background: #f3f2f1;
  display: flex;
  align-items: center;
  font-size: 10.500px;
  color: #666;
}
.st-macro { margin-left: 17px; }
.st-acc { margin-left: 15px; }
.acc { margin-left: 7px; letter-spacing: -.15px; }
.st-right { margin-left: auto; display: flex; align-items: center; height: 100%; }
.view { width: 38px; height: 100%; display: flex; align-items: center; justify-content: center; }
.view.active { background: #cfcfcf; }
.zoom-ctl { display: flex; align-items: center; width: 120px; margin-left: 5px; }
.minus, .add { width: 7px; height: 1px; background: #555; position: relative; flex: none; }
.add::after { content: ""; position: absolute; left: 3px; top: -3px; width: 1px; height: 7px; background: #555; }
.track { flex: 1; height: 1px; background: #c0c0c0; margin: 0 5px; position: relative; }
.knob { position: absolute; left: 26px; top: -5px; width: 5px; height: 11px; background: #777; border-radius: 1px; }
.tick { position: absolute; left: 46px; top: -2px; width: 1px; height: 5px; background: #bbb; }
.pct-label { width: 45px; text-align: center; color: #777; padding-right: 5px; box-sizing: border-box; }

.watermark { position: absolute; left: 1022px; top: 625px; opacity: .75; z-index: 5; pointer-events: none; }
</style>
